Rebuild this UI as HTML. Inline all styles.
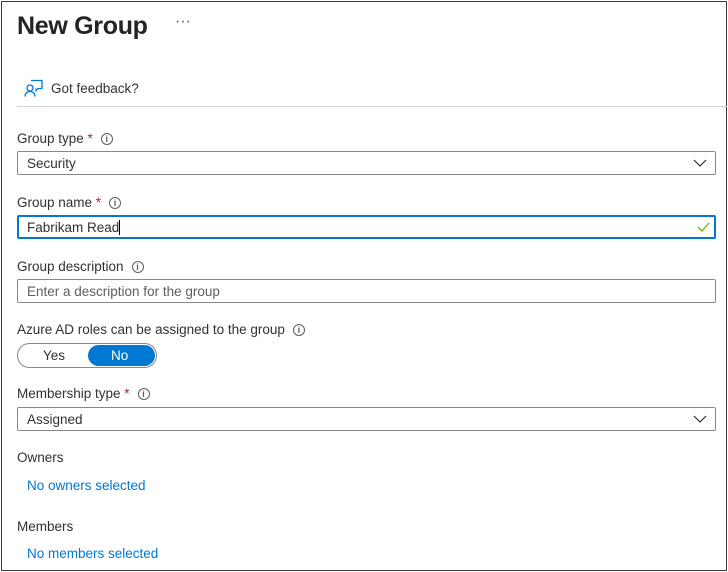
<!DOCTYPE html>
<html><head><meta charset="utf-8"><style>
*{margin:0;padding:0;box-sizing:border-box}
body{width:728px;height:572px;background:#fff;font-family:"Liberation Sans",sans-serif;color:#323130;position:relative;overflow:hidden}
.frame{position:absolute;left:1px;top:1px;width:726px;height:570px;border:1px solid #3a3a3a}
.a{position:absolute;white-space:nowrap}
.lbl{font-size:13.5px;color:#323130;line-height:18px}
.req{color:#a4262c}
.info{display:inline-block;width:12px;height:12px;border:1px solid #605e5c;border-radius:50%;font-size:9px;line-height:10px;text-align:center;color:#605e5c;vertical-align:1px;margin-left:8px;font-weight:bold}
.inp{position:absolute;left:17px;width:699px;height:24px;border:1px solid #8a8886;border-radius:2px;font-size:13.5px;line-height:23px;padding-left:9px}
.link{color:#0078d4;font-size:13.5px}
</style></head><body>
<div class="frame"></div>
<div class="a" style="left:17px;top:12px;font-size:25px;font-weight:bold;color:#252423;letter-spacing:-0.3px">New Group</div>
<div class="a" style="left:175px;top:13px;font-size:16px;color:#605e5c;letter-spacing:0px">···</div>
<svg class="a" style="left:24px;top:78px" width="20" height="20" viewBox="0 0 20 20" fill="none" stroke="#0078d4" stroke-width="1.3"><path d="M7 2.5h11v8h-4l-2 2v-2"/><circle cx="6" cy="10" r="3"/><path d="M1 18.5c0-3 2.2-5 5-5s5 2 5 5"/></svg>
<div class="a lbl" style="left:51px;top:80px">Got feedback?</div>
<div class="a" style="left:17px;top:106px;width:710px;height:1px;background:#d2d0ce"></div>

<div class="a lbl" style="left:17px;top:130px">Group type <span class="req">*</span><span class="info">i</span></div>
<div class="inp" style="top:151px">Security</div>
<svg class="a" style="left:693px;top:158px" width="14" height="10" viewBox="0 0 14 10"><path d="M1 2l6 6 6-6" fill="none" stroke="#323130" stroke-width="1.2"/></svg>

<div class="a lbl" style="left:17px;top:194px">Group name <span class="req">*</span><span class="info">i</span></div>
<div class="inp" style="top:215px;border:2px solid #0078d4;line-height:21px;padding-left:8px">Fabrikam Read<span style="display:inline-block;width:1px;height:15px;background:#000;vertical-align:-3px"></span></div>
<svg class="a" style="left:697px;top:222px" width="13" height="10" viewBox="0 0 13 10"><path d="M1 5l4 4 7-8" fill="none" stroke="#6bb700" stroke-width="1.3"/></svg>

<div class="a lbl" style="left:17px;top:258px">Group description<span class="info">i</span></div>
<div class="inp" style="top:279px;color:#605e5c">Enter a description for the group</div>

<div class="a lbl" style="left:17px;top:321px">Azure AD roles can be assigned to the group<span class="info">i</span></div>
<div class="a" style="left:17px;top:343px;width:140px;height:25px;border:1px solid #8a8886;border-radius:13px"></div>
<div class="a" style="left:88px;top:345px;width:67px;height:21px;background:#0078d4;border-radius:11px"></div>
<div class="a" style="left:43px;top:347px;font-size:13.5px;line-height:18px">Yes</div>
<div class="a" style="left:111px;top:347px;font-size:13.5px;line-height:18px;color:#fff">No</div>

<div class="a lbl" style="left:17px;top:385px">Membership type <span class="req">*</span><span class="info">i</span></div>
<div class="inp" style="top:407px">Assigned</div>
<svg class="a" style="left:693px;top:414px" width="14" height="10" viewBox="0 0 14 10"><path d="M1 2l6 6 6-6" fill="none" stroke="#323130" stroke-width="1.2"/></svg>

<div class="a lbl" style="left:17px;top:449px">Owners</div>
<div class="a link" style="left:27px;top:478px">No owners selected</div>
<div class="a lbl" style="left:17px;top:518px">Members</div>
<div class="a link" style="left:27px;top:546px">No members selected</div>
</body></html>
